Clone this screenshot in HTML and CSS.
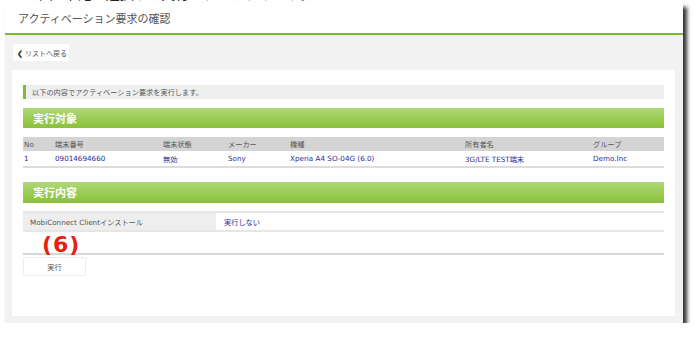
FILE: index.html
```html
<!DOCTYPE html>
<html lang="ja">
<head>
    <meta charset="UTF-8">
    <title>アクティベーション要求の確認</title>
    <link rel="stylesheet" href="styles.css">
</head>
<body>
    <div class="caption">
        <p>（5）下記を選択して実行をクリックします。</p>
    </div>
    <div class="window">
        <div class="page-header">
            <h1>アクティベーション要求の確認</h1>
        </div>
        <div class="page-body">
            <a class="back-button" href="#"><span class="chev">&#10094;</span>リストへ戻る</a>
            <div class="panel">
                <div class="info-bar">以下の内容でアクティベーション要求を実行します。</div>

                <h2 class="section-title">実行対象</h2>
                <table class="target-table">
                    <colgroup>
                        <col style="width: 31px">
                        <col style="width: 108px">
                        <col style="width: 65px">
                        <col style="width: 62px">
                        <col style="width: 175px">
                        <col style="width: 128px">
                        <col>
                    </colgroup>
                    <thead>
                        <tr>
                            <th>No</th>
                            <th>端末番号</th>
                            <th>端末状態</th>
                            <th>メーカー</th>
                            <th>機種</th>
                            <th>所有者名</th>
                            <th>グループ</th>
                        </tr>
                    </thead>
                    <tbody>
                        <tr>
                            <td>1</td>
                            <td>09014694660</td>
                            <td>無効</td>
                            <td>Sony</td>
                            <td>Xperia A4 SO-04G (6.0)</td>
                            <td>3G/LTE TEST端末</td>
                            <td>Demo.Inc</td>
                        </tr>
                    </tbody>
                </table>

                <h2 class="section-title second">実行内容</h2>
                <div class="detail-row">
                    <div class="detail-label">MobiConnect Clientインストール</div>
                    <div class="detail-value">実行しない</div>
                </div>

                <div class="annotation-space">
                    <span class="annotation">(6)</span>
                </div>
                <div class="form-actions">
                    <button type="button" class="run-button">実行</button>
                </div>
            </div>
        </div>
    </div>
</body>
</html>
```

FILE: styles.css
```css
body {
    margin: 0;
    background: #fff;
    font-family: 'DejaVu Sans', 'Noto Sans CJK JP', sans-serif;
    color: #555;
    overflow: hidden;
}

/* only the bottom of this line shows above the window */
.caption {
    height: 3px;
    overflow: hidden;
}
.caption p {
    margin: -15px 0 0 28px;
    font-family: 'Noto Sans CJK JP', sans-serif;
    font-size: 14px;
    line-height: 16px;
    color: #222;
}

.window {
    margin: 0 0 0 5px;
    width: 678px;
    height: 320px;
    background: #f2f2f2;
    box-shadow: 4px 4px 4px rgba(0, 0, 0, 0.8);
    display: flex;
    flex-direction: column;
}

.page-header {
    height: 30px;
    background: #fff;
    border-bottom: 2px solid #7dbd2d;
    display: flex;
    align-items: center;
    padding-left: 13px;
}
.page-header h1 {
    margin: 0;
    font-family: 'Noto Sans CJK JP', sans-serif;
    font-size: 11px;
    font-weight: 400;
    color: #555;
}

.page-body {
    flex: 1;
    padding: 9px 8px 7px 7px;
    display: flex;
    flex-direction: column;
}

.back-button {
    align-self: flex-start;
    margin-left: 1px;
    width: 56px;
    height: 17px;
    box-sizing: border-box;
    background: #fff;
    border-radius: 2px;
    font-family: 'Noto Sans CJK JP', sans-serif;
    font-size: 7px;
    color: #555;
    text-decoration: none;
    display: flex;
    align-items: center;
    padding-left: 4px;
}
.back-button .chev {
    font-size: 7px;
    font-weight: 700;
    color: #333;
    margin-right: 2px;
}

.panel {
    margin-top: 9px;
    flex: 1;
    background: #fff;
    padding: 15px 11px 0 11px;
}

.info-bar {
    height: 14px;
    background: #efefef;
    border-left: 3px solid #7dbd2d;
    font-family: 'Noto Sans CJK JP', sans-serif;
    font-size: 7.2px;
    line-height: 14px;
    padding-left: 6px;
    color: #555;
}

.section-title {
    margin: 9px 0 0 0;
    height: 20px;
    line-height: 20px;
    padding-left: 10px;
    font-family: 'Noto Sans CJK JP', sans-serif;
    font-size: 11px;
    font-weight: 700;
    color: #fff;
    background: linear-gradient(to bottom, #b0d97a 0%, #9bcc55 50%, #8cc03c 100%);
}
.section-title.second {
    margin-top: 14px;
    height: 21px;
    line-height: 21px;
}

.target-table {
    margin-top: 9px;
    width: 100%;
    border-collapse: collapse;
    table-layout: fixed;
    font-size: 7.2px;
}
.target-table th {
    background: #d4d4d4;
    height: 14px;
    padding: 0 0 0 1px;
    text-align: left;
    font-weight: 400;
    color: #555;
}
.target-table td {
    height: 15px;
    padding: 0 0 0 1px;
    color: #2d2d96;
    border-bottom: 2px solid #dcdcdc;
}

.detail-row {
    margin-top: 8px;
    display: flex;
    height: 17px;
    border-top: 2px solid #e6e6e6;
    border-bottom: 2px solid #e6e6e6;
    font-size: 7.2px;
}
.detail-label {
    width: 186px;
    background: #eeeeee;
    display: flex;
    align-items: center;
    padding-left: 7px;
    color: #555;
}
.detail-value {
    flex: 1;
    display: flex;
    align-items: center;
    padding-left: 8px;
    color: #2d2d96;
}

.annotation-space {
    position: relative;
    height: 21px;
    border-bottom: 2px solid #d6d6d6;
}
.annotation {
    position: absolute;
    left: 19px;
    top: 1px;
    font-family: 'DejaVu Sans', sans-serif;
    font-size: 22px;
    line-height: 24px;
    letter-spacing: 1px;
    font-weight: 700;
    color: #e8200f;
}

.form-actions {
    display: flex;
    padding-top: 2px;
}
.run-button {
    width: 63px;
    height: 19px;
    background: #fff;
    border: 1px solid #ececec;
    border-radius: 2px;
    font-family: 'Noto Sans CJK JP', sans-serif;
    font-size: 7.2px;
    color: #555;
    padding: 0;
}
```
